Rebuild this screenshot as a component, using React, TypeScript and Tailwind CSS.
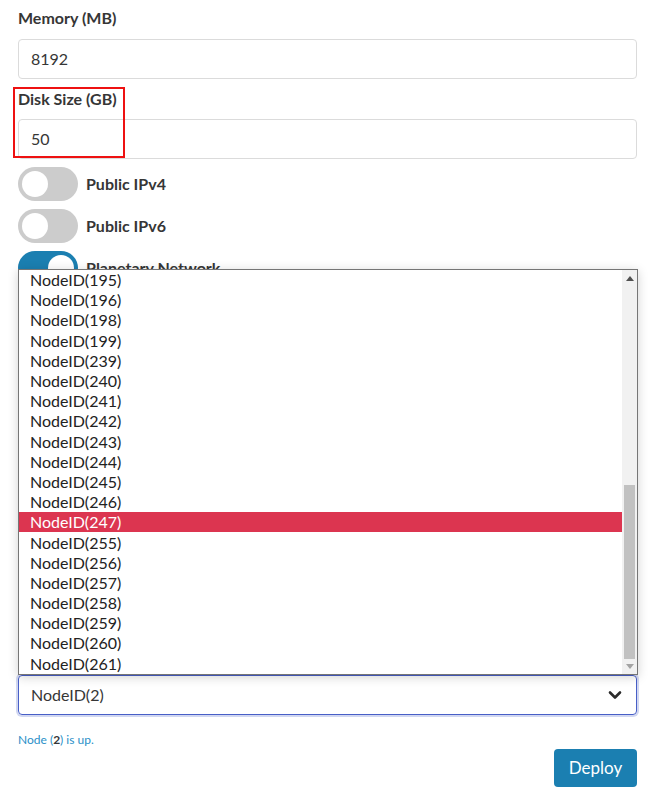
import React from "react";

const nodes = [195, 196, 198, 199, 239, 240, 241, 242, 243, 244, 245, 246, 247, 255, 256, 257, 258, 259, 260, 261];

function Toggle({ on, label }: { on: boolean; label: string }) {
  return (
    <div className="flex items-center h-[34px] gap-[8px]">
      <div
        className={`w-[60px] h-[34px] rounded-full flex items-center px-[4px] ${
          on ? "bg-[#1b7fb1] justify-end" : "bg-[#cccccc] justify-start"
        }`}
      >
        <div className="w-[26px] h-[26px] rounded-full bg-white" />
      </div>
      <span className="text-[16px] font-bold text-[#363636]">{label}</span>
    </div>
  );
}

export default function App() {
  return (
    <div
      className="relative w-[657px] h-[803px] bg-white overflow-hidden"
      style={{ fontFamily: "Lato, 'Noto Sans', sans-serif" }}
    >
      <div className="flex flex-col pl-[18px] pr-[20px] pt-[7px]">
        <label className="text-[16px] font-bold text-[#363636] leading-[22px]">Memory (MB)</label>
        <div className="mt-[10px] h-[40px] border border-[#dbdbdb] rounded-[4px] flex items-center px-[12px] text-[16px] text-[#363636]">
          8192
        </div>
        <label className="mt-[9px] text-[16px] font-bold text-[#363636] leading-[22px]">Disk Size (GB)</label>
        <div className="mt-[9px] h-[40px] border border-[#dbdbdb] rounded-[4px] flex items-center px-[12px] text-[16px] text-[#363636]">
          50
        </div>
        <div className="mt-[8px] flex flex-col gap-[8px]">
          <Toggle on={false} label="Public IPv4" />
          <Toggle on={false} label="Public IPv6" />
          <Toggle on={true} label="Planetary Network" />
        </div>
        <div className="mt-[390px] h-[40px] border border-[#485fc7] rounded-[4px] shadow-[0_0_0_2px_rgba(72,95,199,0.25)] flex items-center justify-between pl-[12px] pr-[14px] text-[16px] text-[#363636]">
          <span>NodeID(2)</span>
          <svg width="14" height="10" viewBox="0 0 14 10">
            <path d="M2 2.5 L7 7.5 L12 2.5" fill="none" stroke="#2b2b2b" strokeWidth="2.6" strokeLinecap="round" strokeLinejoin="round" />
          </svg>
        </div>
        <p className="mt-[18px] text-[12px] text-[#2a8fc8] leading-[14px]">
          Node (<span className="font-bold text-[#363636]">2</span>) is up.
        </p>
        <div className="flex justify-end mt-[2px]">
          <button className="w-[83px] h-[38px] rounded-[4px] bg-[#1b7fb1] text-white text-[17px]">Deploy</button>
        </div>
      </div>

      {/* red highlight box */}
      <div className="absolute left-[13px] top-[87px] w-[112px] h-[71px] border-2 border-[#ee1111]" />

      {/* open select list */}
      <div className="absolute left-[18px] top-[269px] w-[620px] h-[406px] bg-white border border-[#767676] shadow-[0_2px_10px_rgba(0,0,0,0.18)] flex">
        <div className="flex-1 flex flex-col">
          {nodes.map((n) => (
            <div
              key={n}
              className={`h-[20.2px] flex items-center pl-[11px] text-[16px] ${
                n === 247 ? "bg-[#dc3550] text-white" : "text-[#222222]"
              }`}
            >
              NodeID({n})
            </div>
          ))}
        </div>
        <div className="w-[15px] bg-[#f1f1f1] flex flex-col items-center">
          <div className="h-[17px] flex items-center justify-center">
            <svg width="8" height="5" viewBox="0 0 8 5">
              <path d="M0 5 L4 0 L8 5 Z" fill="#505050" />
            </svg>
          </div>
          <div className="mt-[198px] w-[11px] h-[174px] bg-[#c1c1c1]" />
          <div className="h-[15px] flex items-center justify-center">
            <svg width="8" height="5" viewBox="0 0 8 5">
              <path d="M0 0 L8 0 L4 5 Z" fill="#a3a3a3" />
            </svg>
          </div>
        </div>
      </div>
    </div>
  );
}
